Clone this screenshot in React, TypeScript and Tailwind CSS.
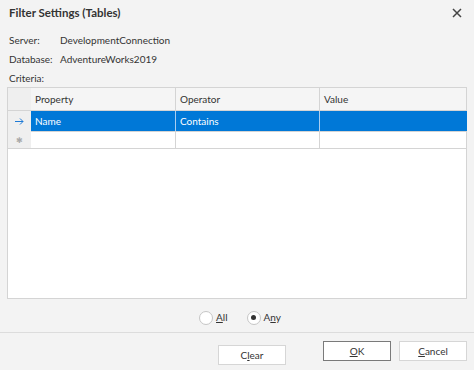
import React from 'react';

const font = { fontFamily: 'Lato, "Noto Sans", sans-serif' };

function Radio({ label, accel, rest, checked }: { label?: string; accel: string; rest: string; checked?: boolean }) {
  return (
    <div className="flex items-center gap-[3px]">
      <div className="w-[14px] h-[14px] rounded-full border border-[#c6c6c6] bg-white flex items-center justify-center">
        {checked && <div className="w-[5px] h-[5px] rounded-full bg-[#333]" />}
      </div>
      <span className="text-[10px] text-[#333]">
        {label}
        <span className="underline">{accel}</span>
        {rest}
      </span>
    </div>
  );
}

function Button({ children, focused }: { children: React.ReactNode; focused?: boolean }) {
  return (
    <button
      className={`w-[68px] h-[20px] text-[10px] text-[#333] bg-white border leading-none ${
        focused ? 'border-[#7a7a7a]' : 'border-[#d6d6d6]'
      }`}
    >
      {children}
    </button>
  );
}

export default function App() {
  const cols = 'grid grid-cols-[23px_145px_144px_147px]';
  return (
    <div className="w-[474px] h-[370px] bg-[#f3f3f3] flex flex-col text-[#333]" style={font}>
      <div className="h-[26px] flex items-center justify-between pl-[9px] pr-[12px]">
        <span className="text-[11.5px] font-bold">Filter Settings (Tables)</span>
        <svg width="10" height="10" viewBox="0 0 10 10">
          <path d="M1 1L9 9M9 1L1 9" stroke="#444" strokeWidth="1.5" />
        </svg>
      </div>
      <div className="flex flex-col px-[9px] text-[10px] leading-[19px] mt-[5px]">
        <div className="flex">
          <span className="w-[51px]">Server:</span>
          <span>DevelopmentConnection</span>
        </div>
        <div className="flex">
          <span className="w-[51px] whitespace-nowrap">Database:</span>
          <span>AdventureWorks2019</span>
        </div>
        <div>Criteria:</div>
      </div>
      <div className="mx-[7px] mt-[-1px] h-[212px] border border-[#d4d4d4] bg-white flex flex-col text-[10px]">
        <div className={`${cols} h-[23px] bg-[#f5f5f5] border-b border-[#d4d4d4]`}>
          <div className="bg-[#efefef]" />
          <div className="pl-[4px] flex items-center border-r border-[#d4d4d4]">Property</div>
          <div className="pl-[4px] flex items-center border-r border-[#d4d4d4]">Operator</div>
          <div className="pl-[4px] flex items-center">Value</div>
        </div>
        <div className={`${cols} h-[20px]`}>
          <div className="bg-[#efefef] flex items-center justify-center">
            <svg width="9" height="7" viewBox="0 0 9 7">
              <path d="M0 3.5H8M5 0.5L8 3.5L5 6.5" stroke="#1e7ad6" strokeWidth="1" fill="none" />
            </svg>
          </div>
          <div className="bg-[#0078d7] text-white pl-[4px] flex items-center border-r border-[#a9cdf0]">Name</div>
          <div className="bg-[#0078d7] text-white pl-[4px] flex items-center border-r border-[#a9cdf0]">Contains</div>
          <div className="bg-[#0078d7]" />
        </div>
        <div className={`${cols} h-[18px] border-b border-[#d4d4d4]`}>
          <div className="bg-[#efefef] flex items-center justify-center text-[#aaa] text-[8px]">✱</div>
          <div className="border-r border-t border-[#d4d4d4]" />
          <div className="border-r border-t border-[#d4d4d4]" />
          <div className="border-t border-[#d4d4d4]" />
        </div>
        <div className="flex-1" />
      </div>
      <div className="flex justify-center gap-[19px] mt-[11px] pl-[6px]">
        <Radio accel="A" rest="ll" />
        <Radio label="A" accel="n" rest="y" checked />
      </div>
      <div className="mt-[7px] border-t border-[#dcdcdc] flex-1 flex items-start pt-[8px]">
        <div className="ml-[218px]">
          <Button>
            C<span className="underline">l</span>ear
          </Button>
        </div>
        <div className="ml-[37px] flex gap-[8px]">
          <Button focused>
            <span className="underline">O</span>K
          </Button>
          <Button>
            <span className="underline">C</span>ancel
          </Button>
        </div>
      </div>
    </div>
  );
}
